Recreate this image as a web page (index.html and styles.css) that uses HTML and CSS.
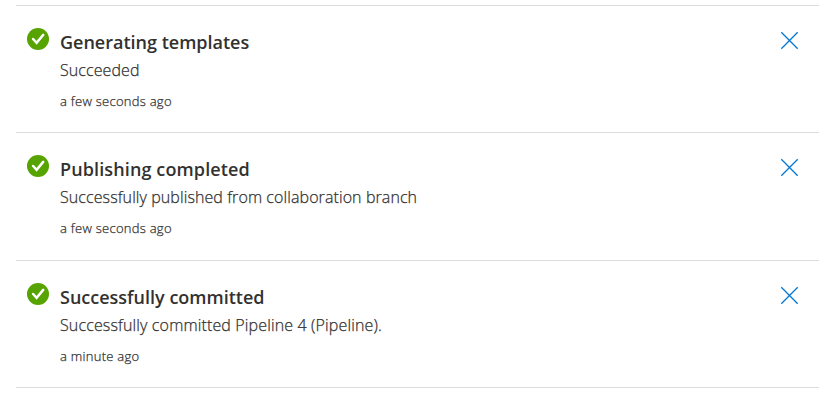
FILE: index.html
```html
<!DOCTYPE html>
<html lang="en">
<head>
<meta charset="utf-8">
<title>Notifications</title>
<link rel="stylesheet" href="styles.css">
</head>
<body>
<ul class="list">
  <li class="item">
    <svg class="status" viewBox="0 0 22 22"><circle cx="11" cy="11" r="11"/><path d="M6.1 11l3.5 3.8 6.6-7.9"/></svg>
    <div class="body">
      <h2 class="title">Generating templates</h2>
      <p class="message">Succeeded</p>
      <p class="time">a few seconds ago</p>
    </div>
    <button class="close" aria-label="Dismiss"><svg viewBox="0 0 17 17"><path d="M.3.3l16.4 16.4M16.7.3L.3 16.7"/></svg></button>
  </li>
  <li class="item tall">
    <svg class="status" viewBox="0 0 22 22"><circle cx="11" cy="11" r="11"/><path d="M6.1 11l3.5 3.8 6.6-7.9"/></svg>
    <div class="body">
      <h2 class="title publishing">Publishing completed</h2>
      <p class="message">Successfully published from collaboration branch</p>
      <p class="time">a few seconds ago</p>
    </div>
    <button class="close" aria-label="Dismiss"><svg viewBox="0 0 17 17"><path d="M.3.3l16.4 16.4M16.7.3L.3 16.7"/></svg></button>
  </li>
  <li class="item">
    <svg class="status" viewBox="0 0 22 22"><circle cx="11" cy="11" r="11"/><path d="M6.1 11l3.5 3.8 6.6-7.9"/></svg>
    <div class="body">
      <h2 class="title">Successfully committed</h2>
      <p class="message committed">Successfully committed Pipeline 4 (Pipeline).</p>
      <p class="time">a minute ago</p>
    </div>
    <button class="close" aria-label="Dismiss"><svg viewBox="0 0 17 17"><path d="M.3.3l16.4 16.4M16.7.3L.3 16.7"/></svg></button>
  </li>
</ul>
</body>
</html>
```
FILE: styles.css
```css
* { box-sizing: border-box; }
body { margin: 0; background: #fff; color: #323130; font-family: "Open Sans", "Noto Sans", sans-serif; }
.list { list-style: none; margin: 5px 9px 0 16px; padding: 0; border-top: 1px solid #dcdcdc; }
.item { display: flex; align-items: flex-start; height: 127px; padding: 22px 21px 0 11px; border-bottom: 1px solid #dcdcdc; }
.tall { height: 128px; }
.status { width: 22px; height: 22px; margin-right: 11px; flex: none; }
.status circle { fill: #57a300; }
.status path { fill: none; stroke: #fff; stroke-width: 2.5; stroke-linecap: round; }
.body { flex: 1; }
.title, .message, .time { margin: 0; white-space: nowrap; }
.title { font-size: 18px; line-height: 28px; font-weight: 600; }
.publishing { letter-spacing: 0.12px; }
.message { font-size: 16px; line-height: 28px; font-weight: 300; letter-spacing: 0.09px; -webkit-text-stroke: 0.25px #323130; }
.committed { letter-spacing: 0.14px; }
.time { font-size: 13px; line-height: 20px; margin-top: 7px; font-weight: 300; letter-spacing: 0.27px; -webkit-text-stroke: 0.25px #323130; }
.close { width: 17px; height: 17px; padding: 0; border: 0; background: none; margin-top: 4px; }
.close svg { display: block; width: 17px; height: 17px; fill: none; stroke: #0078d4; stroke-width: 1.3; overflow: visible; }
```
